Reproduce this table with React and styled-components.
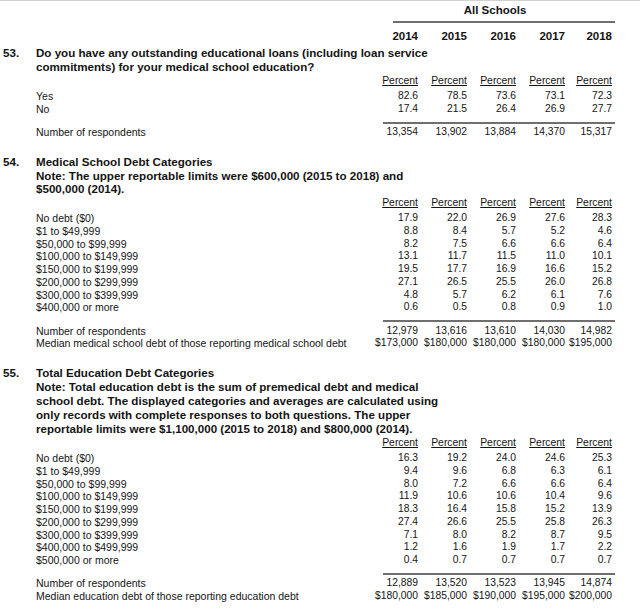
import React from 'react'
import styled, { createGlobalStyle } from 'styled-components'

const GlobalStyle = createGlobalStyle`
  body {
    margin: 0;
    background: #fff;
  }
`

const Page = styled.div`
  width: 640px;
  box-sizing: border-box;
  border-top: 1px solid #d2d2d2;
  padding: 2px 0 0 3px;
  font-family: 'Liberation Sans', Arial, sans-serif;
  color: #141414;
`

const Grid = styled.div`
  display: grid;
  grid-template-columns: 33px 333px 49px 49px 49px 49px 47px;
  margin-top: ${p => p.$mt || 0}px;
`

const HeadTitle = styled.div`
  grid-column: 3 / 8;
  text-align: center;
  padding-left: 9px;
  font-weight: bold;
  font-size: 11.5px;
  line-height: 14px;
`

const Rule = styled.div`
  height: 2px;
  background: #6f6f6f;
  width: ${p => 615 - p.$from}px;
  margin: ${p => p.$mt}px 0 0 ${p => p.$from - 3}px;
`

const Spacer = styled.span`
  grid-column: 1 / 3;
`

const Year = styled.span`
  font-weight: bold;
  font-size: 11.5px;
  line-height: 14px;
  text-align: right;
`

const QNum = styled.span`
  font-weight: bold;
  font-size: 11.6px;
  line-height: ${p => p.$lh}px;
`

const QText = styled.div`
  grid-column: 2 / 8;
  font-weight: bold;
  font-size: 11.6px;
  line-height: ${p => p.$lh}px;
  white-space: nowrap;

  span {
    display: block;
  }
`

const Percent = styled.span`
  font-size: 10.4px;
  line-height: 13px;
  text-align: right;
  text-decoration: underline;
  text-underline-offset: 1px;
`

const Label = styled.span`
  grid-column-start: 2;
  font-size: 10.5px;
  line-height: 12.75px;
  white-space: nowrap;
`

const Value = styled.span`
  font-size: 10.3px;
  line-height: 12.75px;
  text-align: right;
  white-space: nowrap;
`

const years = ['2014', '2015', '2016', '2017', '2018']

const sections = [
  {
    num: '53.',
    mt: 3,
    lh: 14,
    lines: [
      'Do you have any outstanding educational loans (including loan service',
      'commitments) for your medical school education?'
    ],
    rows: [
      ['Yes', '82.6', '78.5', '73.6', '73.1', '72.3'],
      ['No', '17.4', '21.5', '26.4', '26.9', '27.7']
    ],
    totals: [
      ['Number of respondents', '13,354', '13,902', '13,884', '14,370', '15,317']
    ]
  },
  {
    num: '54.',
    mt: 16.5,
    lh: 13.6,
    lines: [
      'Medical School Debt Categories',
      'Note: The upper reportable limits were $600,000 (2015 to 2018) and',
      '$500,000 (2014).'
    ],
    rows: [
      ['No debt ($0)', '17.9', '22.0', '26.9', '27.6', '28.3'],
      ['$1 to $49,999', '8.8', '8.4', '5.7', '5.2', '4.6'],
      ['$50,000 to $99,999', '8.2', '7.5', '6.6', '6.6', '6.4'],
      ['$100,000 to $149,999', '13.1', '11.7', '11.5', '11.0', '10.1'],
      ['$150,000 to $199,999', '19.5', '17.7', '16.9', '16.6', '15.2'],
      ['$200,000 to $299,999', '27.1', '26.5', '25.5', '26.0', '26.8'],
      ['$300,000 to $399,999', '4.8', '5.7', '6.2', '6.1', '7.6'],
      ['$400,000 or more', '0.6', '0.5', '0.8', '0.9', '1.0']
    ],
    totals: [
      ['Number of respondents', '12,979', '13,616', '13,610', '14,030', '14,982'],
      ['Median medical school debt of those reporting medical school debt', '$173,000', '$180,000', '$180,000', '$180,000', '$195,000']
    ]
  },
  {
    num: '55.',
    mt: 16,
    lh: 14,
    lines: [
      'Total Education Debt Categories',
      'Note: Total education debt is the sum of premedical debt and medical',
      'school debt. The displayed categories and averages are calculated using',
      'only records with complete responses to both questions. The upper',
      'reportable limits were $1,100,000 (2015 to 2018) and $800,000 (2014).'
    ],
    rows: [
      ['No debt ($0)', '16.3', '19.2', '24.0', '24.6', '25.3'],
      ['$1 to $49,999', '9.4', '9.6', '6.8', '6.3', '6.1'],
      ['$50,000 to $99,999', '8.0', '7.2', '6.6', '6.6', '6.4'],
      ['$100,000 to $149,999', '11.9', '10.6', '10.6', '10.4', '9.6'],
      ['$150,000 to $199,999', '18.3', '16.4', '15.8', '15.2', '13.9'],
      ['$200,000 to $299,999', '27.4', '26.6', '25.5', '25.8', '26.3'],
      ['$300,000 to $399,999', '7.1', '8.0', '8.2', '8.7', '9.5'],
      ['$400,000 to $499,999', '1.2', '1.6', '1.9', '1.7', '2.2'],
      ['$500,000 or more', '0.4', '0.7', '0.7', '0.7', '0.7']
    ],
    totals: [
      ['Number of respondents', '12,889', '13,520', '13,523', '13,945', '14,874'],
      ['Median education debt of those reporting education debt', '$180,000', '$185,000', '$190,000', '$195,000', '$200,000']
    ]
  }
]

function DataRows ({ rows }) {
  return rows.map(([label, ...vals]) => (
    <React.Fragment key={label}>
      <Label>{label}</Label>
      {vals.map((v, i) => <Value key={i}>{v}</Value>)}
    </React.Fragment>
  ))
}

function Section ({ num, mt, lh, lines, rows, totals }) {
  return (
    <>
      <Grid $mt={mt}>
        <QNum $lh={lh}>{num}</QNum>
        <QText $lh={lh}>
          {lines.map(l => <span key={l}>{l}</span>)}
        </QText>
      </Grid>
      <Grid>
        <Spacer />
        {years.map(y => <Percent key={y}>Percent</Percent>)}
      </Grid>
      <Grid $mt={3}>
        <DataRows rows={rows} />
      </Grid>
      <Rule $from={383} $mt={6} />
      <Grid $mt={2.5}>
        <DataRows rows={totals} />
      </Grid>
    </>
  )
}

export default function App () {
  return (
    <Page>
      <GlobalStyle />
      <Grid>
        <HeadTitle>All Schools</HeadTitle>
      </Grid>
      <Rule $from={393} $mt={4} />
      <Grid $mt={6}>
        <Spacer />
        {years.map(y => <Year key={y}>{y}</Year>)}
      </Grid>
      {sections.map(s => <Section key={s.num} {...s} />)}
    </Page>
  )
}
